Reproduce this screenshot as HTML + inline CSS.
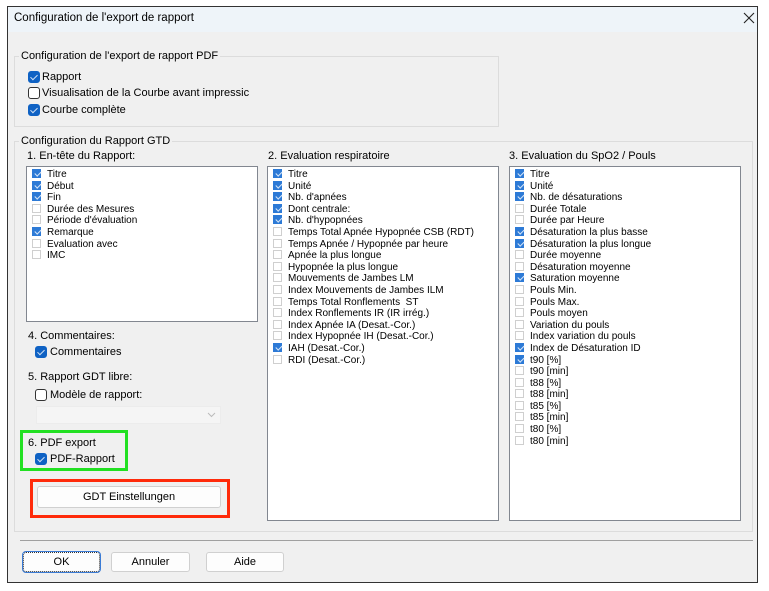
<!DOCTYPE html>
<html><head><meta charset="utf-8"><style>
*{box-sizing:border-box;margin:0;padding:0}
body{width:769px;height:591px;background:#fff;font-family:"Liberation Sans",sans-serif;font-size:11px;color:#000;position:relative;overflow:hidden}
.a{position:absolute}
.win{left:7px;top:6px;width:751px;height:577px;border:1px solid #333;background:#f0f0f0}
.title{left:8px;top:7px;width:749px;height:25px;background:#eef4f9}
.grp{border:1px solid #dcdcdc}
.lbl{background:#f0f0f0;padding:0 2px;white-space:nowrap;font-size:11px}
.cb{width:12px;height:12px;border-radius:3px;border:1px solid #333;background:#fff}
.cb.on{background:#0f62c4;border-color:#0f62c4}
.cb.on::after{content:"";position:absolute;left:3px;top:1px;width:3px;height:6px;border:solid #cfe0f5;border-width:0 1.3px 1.3px 0;transform:rotate(45deg)}
.list{background:#fff;border:1px solid #828790;padding-top:2px}
.it{height:11.6px;line-height:11.6px;position:relative;padding-left:20px;white-space:nowrap;font-size:10px}
.sc{display:block;position:absolute;left:5px;top:0px;width:9px;height:9px;border:1px solid #cfcfcf;background:#fff}
.sc.on{background:#2d7ad6;border-color:#2d7ad6}
.sc.on::after{content:"";position:absolute;left:2.5px;top:0px;width:2.5px;height:5px;border:solid #d6e6f8;border-width:0 1.2px 1.2px 0;transform:rotate(45deg)}
.btn{background:#fdfdfd;border:1px solid #d0d0d0;border-radius:3px;text-align:center;font-size:11px;line-height:18px}
</style></head><body>
<div class="a win"></div>
<div class="a title"></div>
<div class="a" style="left:14px;top:12px;font-size:11.5px">Configuration de l'export de rapport</div>
<svg class="a" style="left:743px;top:12px" width="12" height="12"><path d="M1 1L11 11M11 1L1 11" stroke="#222" stroke-width="1.1"/></svg>

<div class="a grp" style="left:14px;top:56px;width:485px;height:71px"></div>
<div class="a lbl" style="left:19px;top:50px">Configuration de l'export de rapport PDF</div>
<div class="a cb on" style="left:28px;top:71px"></div><div class="a" style="left:42px;top:71px">Rapport</div>
<div class="a cb" style="left:28px;top:87px"></div><div class="a" style="left:42px;top:87px">Visualisation de la Courbe avant impressic</div>
<div class="a cb on" style="left:28px;top:104px"></div><div class="a" style="left:42px;top:104px">Courbe complète</div>

<div class="a grp" style="left:14px;top:141px;width:739px;height:391px"></div>
<div class="a lbl" style="left:19px;top:135px">Configuration du Rapport GTD</div>

<div class="a" style="left:27px;top:150px">1. En-tête du Rapport:</div>
<div class="a list" style="left:26px;top:166px;width:232px;height:156px">
<div class="it"><i class="sc on"></i>Titre</div>
<div class="it"><i class="sc on"></i>Début</div>
<div class="it"><i class="sc on"></i>Fin</div>
<div class="it"><i class="sc"></i>Durée des Mesures</div>
<div class="it"><i class="sc"></i>Période d'évaluation</div>
<div class="it"><i class="sc on"></i>Remarque</div>
<div class="it"><i class="sc"></i>Evaluation avec</div>
<div class="it"><i class="sc"></i>IMC</div>
</div>

<div class="a" style="left:268px;top:150px">2. Evaluation respiratoire</div>
<div class="a list" style="left:267px;top:166px;width:232px;height:355px">
<div class="it"><i class="sc on"></i>Titre</div>
<div class="it"><i class="sc on"></i>Unité</div>
<div class="it"><i class="sc on"></i>Nb. d'apnées</div>
<div class="it"><i class="sc on"></i>Dont centrale:</div>
<div class="it"><i class="sc on"></i>Nb. d'hypopnées</div>
<div class="it"><i class="sc"></i>Temps Total Apnée Hypopnée CSB (RDT)</div>
<div class="it"><i class="sc"></i>Temps Apnée / Hypopnée par heure</div>
<div class="it"><i class="sc"></i>Apnée la plus longue</div>
<div class="it"><i class="sc"></i>Hypopnée la plus longue</div>
<div class="it"><i class="sc"></i>Mouvements de Jambes LM</div>
<div class="it"><i class="sc"></i>Index Mouvements de Jambes ILM</div>
<div class="it"><i class="sc"></i>Temps Total Ronflements&nbsp; ST</div>
<div class="it"><i class="sc"></i>Index Ronflements IR (IR irrég.)</div>
<div class="it"><i class="sc"></i>Index Apnée IA (Desat.-Cor.)</div>
<div class="it"><i class="sc"></i>Index Hypopnée IH (Desat.-Cor.)</div>
<div class="it"><i class="sc on"></i>IAH (Desat.-Cor.)</div>
<div class="it"><i class="sc"></i>RDI (Desat.-Cor.)</div>
</div>

<div class="a" style="left:509px;top:150px">3. Evaluation du SpO2 / Pouls</div>
<div class="a list" style="left:509px;top:166px;width:232px;height:355px">
<div class="it"><i class="sc on"></i>Titre</div>
<div class="it"><i class="sc on"></i>Unité</div>
<div class="it"><i class="sc on"></i>Nb. de désaturations</div>
<div class="it"><i class="sc"></i>Durée Totale</div>
<div class="it"><i class="sc"></i>Durée par Heure</div>
<div class="it"><i class="sc on"></i>Désaturation la plus basse</div>
<div class="it"><i class="sc on"></i>Désaturation la plus longue</div>
<div class="it"><i class="sc"></i>Durée moyenne</div>
<div class="it"><i class="sc"></i>Désaturation moyenne</div>
<div class="it"><i class="sc on"></i>Saturation moyenne</div>
<div class="it"><i class="sc"></i>Pouls Min.</div>
<div class="it"><i class="sc"></i>Pouls Max.</div>
<div class="it"><i class="sc"></i>Pouls moyen</div>
<div class="it"><i class="sc"></i>Variation du pouls</div>
<div class="it"><i class="sc"></i>Index variation du pouls</div>
<div class="it"><i class="sc on"></i>Index de Désaturation ID</div>
<div class="it"><i class="sc on"></i>t90 [%]</div>
<div class="it"><i class="sc"></i>t90 [min]</div>
<div class="it"><i class="sc"></i>t88 [%]</div>
<div class="it"><i class="sc"></i>t88 [min]</div>
<div class="it"><i class="sc"></i>t85 [%]</div>
<div class="it"><i class="sc"></i>t85 [min]</div>
<div class="it"><i class="sc"></i>t80 [%]</div>
<div class="it"><i class="sc"></i>t80 [min]</div>
</div>

<div class="a" style="left:28px;top:330px">4. Commentaires:</div>
<div class="a cb on" style="left:35px;top:346px"></div><div class="a" style="left:50px;top:346px">Commentaires</div>
<div class="a" style="left:28px;top:371px">5. Rapport GDT libre:</div>
<div class="a cb" style="left:35px;top:389px"></div><div class="a" style="left:50px;top:389px">Modèle de rapport:</div>
<div class="a" style="left:36px;top:406px;width:185px;height:18px;background:#f5f5f5;border:1px solid #ececec"></div>
<svg class="a" style="left:207px;top:412px" width="9" height="6"><path d="M1 1L4.5 4.5L8 1" stroke="#bbb" fill="none"/></svg>

<div class="a" style="left:20px;top:430px;width:108px;height:41px;border:3px solid #22e022"></div>
<div class="a" style="left:28px;top:437px">6. PDF export</div>
<div class="a cb on" style="left:35px;top:453px"></div><div class="a" style="left:50px;top:453px">PDF-Rapport</div>

<div class="a" style="left:30px;top:479px;width:200px;height:39px;border:3px solid #ff2a0a"></div>
<div class="a btn" style="left:37px;top:486px;width:184px;height:22px;line-height:20px">GDT Einstellungen</div>

<div class="a" style="left:20px;top:540px;width:733px;height:1px;background:#a0a0a0"></div>
<div class="a btn" style="left:23px;top:552px;width:77px;height:20px;border:1px dotted #333;outline:1px solid #3a7bd5;outline-offset:0">OK</div>
<div class="a btn" style="left:111px;top:552px;width:79px;height:20px">Annuler</div>
<div class="a btn" style="left:206px;top:552px;width:78px;height:20px">Aide</div>
</body></html>
